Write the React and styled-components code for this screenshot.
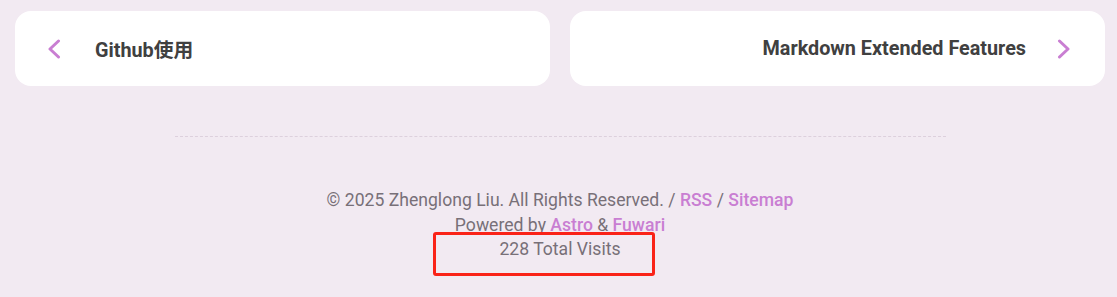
import React from "react";
import styled, { createGlobalStyle } from "styled-components";

const Global = createGlobalStyle`
  html, body { margin: 0; padding: 0; background: #f2eaf2; }
  body { font-family: Roboto, "Noto Sans CJK SC", sans-serif; }
`;

const Page = styled.div`
  width: 1117px;
  height: 297px;
  box-sizing: border-box;
  padding: 11px 12px 0 15px;
  overflow: hidden;
`;

const Nav = styled.div`
  display: grid;
  grid-template-columns: 1fr 1fr;
  gap: 20px;
`;

const Card = styled.a`
  height: 75px;
  background: #ffffff;
  border-radius: 16px;
  display: flex;
  align-items: center;
  justify-content: ${(p) => (p.$next ? "flex-end" : "flex-start")};
  gap: ${(p) => (p.$next ? "31px" : "34px")};
  padding: ${(p) => (p.$next ? "0 34px 0 24px" : "0 24px 0 32px")};
  text-decoration: none;
  box-sizing: border-box;
`;

const Title = styled.span`
  font-family: Roboto, "Noto Sans CJK SC", sans-serif;
  font-weight: 700;
  font-size: 19.8px;
  color: #404040;
  letter-spacing: 0;
`;

const Chevron = ({ dir }) => (
  <svg width="14" height="20" viewBox="0 0 14 20" style={{ flex: "none" }}>
    <polyline
      points={dir === "left" ? "11.5,2 3,10 11.5,18" : "2.5,2 11,10 2.5,18"}
      fill="none"
      stroke="#c97ed2"
      strokeWidth="3"
      strokeLinecap="round"
      strokeLinejoin="round"
    />
  </svg>
);

const Divider = styled.div`
  width: 771px;
  margin: 50px auto 0;
  border-top: 1px dashed #ddd0dd;
`;

const Footer = styled.footer`
  position: relative;
  margin-top: 51px;
  font-size: 17.6px;
  line-height: 24.5px;
  color: #787078;
  text-align: center;
`;

const Line = styled.div``;

const Link = styled.a`
  color: #c97ed2;
  font-weight: 500;
  text-decoration: none;
`;

const Highlight = styled.div`
  position: absolute;
  left: 418px;
  top: 44px;
  width: 222px;
  height: 44px;
  box-sizing: border-box;
  border: 3px solid #fa2318;
  border-radius: 3px;
  pointer-events: none;
`;

export default function App() {
  return (
    <>
      <Global />
      <Page>
        <Nav>
          <Card href="#">
            <Chevron dir="left" />
            <Title>Github使用</Title>
          </Card>
          <Card href="#" $next>
            <Title>Markdown Extended Features</Title>
            <Chevron dir="right" />
          </Card>
        </Nav>
        <Divider />
        <Footer>
          <Line>
            © 2025 Zhenglong Liu. All Rights Reserved. / <Link href="#">RSS</Link> /{" "}
            <Link href="#">Sitemap</Link>
          </Line>
          <Line>
            Powered by <Link href="#">Astro</Link> &amp; <Link href="#">Fuwari</Link>
          </Line>
          <Line>228 Total Visits</Line>
          <Highlight />
        </Footer>
      </Page>
    </>
  );
}
